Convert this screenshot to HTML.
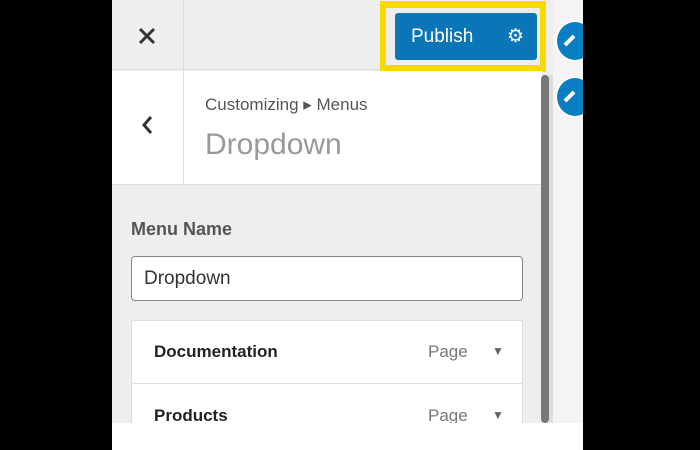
<!DOCTYPE html>
<html><head><style>
*{margin:0;padding:0;box-sizing:border-box}
body{width:700px;height:450px;background:#000;position:relative;overflow:hidden;font-family:"Liberation Sans",sans-serif}
.a{position:absolute}
</style></head><body>
<div class="a" style="left:112px;top:0;width:471px;height:450px;background:#eee"></div>
<div class="a" style="left:553px;top:0;width:30px;height:423px;background:#f4f4f4"></div>
<div class="a" style="left:555px;top:20px;width:40px;height:42px;border-radius:50%;background:#0a7ec2;border:2px solid #fff"></div>
<div class="a" style="left:555px;top:76px;width:40px;height:42px;border-radius:50%;background:#0a7ec2;border:2px solid #fff"></div>
<svg class="a" style="left:562px;top:32px" width="16" height="16"><path d="M3 13 L12 4" stroke="#fff" stroke-width="4"/></svg>
<svg class="a" style="left:562px;top:88px" width="16" height="16"><path d="M3 13 L12 4" stroke="#fff" stroke-width="4"/></svg>
<div class="a" style="left:583px;top:0;width:117px;height:450px;background:#000"></div>
<div class="a" style="left:112px;top:0;width:430px;height:70px;background:#eee;border-bottom:1px solid #ddd"></div>
<div class="a" style="left:183px;top:0;width:1px;height:185px;background:#ddd"></div>
<svg class="a" style="left:138px;top:27px" width="18" height="18"><path d="M2 2 L16 16 M16 2 L2 16" stroke="#333" stroke-width="3"/></svg>
<div class="a" style="left:380px;top:1px;width:166px;height:71px;background:#f7d900"></div>
<div class="a" style="left:386px;top:8px;width:154px;height:57px;background:#eee"></div>
<div class="a" style="left:395px;top:13px;width:142px;height:47px;background:#0a76b8;border-radius:3px;color:#fff;font-size:19px;line-height:47px;padding-left:16px">Publish<span style="position:absolute;right:13px;font-size:19px">⚙</span></div>
<div class="a" style="left:112px;top:71px;width:430px;height:114px;background:#fff;border-bottom:1px solid #ddd"></div>
<div class="a" style="left:183px;top:71px;width:1px;height:114px;background:#ddd"></div>
<svg class="a" style="left:140px;top:115px" width="14" height="20"><path d="M11 2 L4 10 L11 18" stroke="#333" stroke-width="3" fill="none"/></svg>
<div class="a" style="left:205px;top:95px;font-size:17px;color:#555">Customizing ▸ Menus</div>
<div class="a" style="left:205px;top:128px;font-size:30px;color:#999;font-weight:300">Dropdown</div>
<div class="a" style="left:541px;top:75px;width:8px;height:348px;background:#777;border-radius:4px"></div>
<div class="a" style="left:549px;top:75px;width:4px;height:348px;background:#ddd"></div>
<div class="a" style="left:131px;top:219px;font-size:18px;font-weight:bold;color:#555">Menu Name</div>
<div class="a" style="left:131px;top:256px;width:392px;height:45px;background:#fff;border:1px solid #888;border-radius:4px;font-size:19px;color:#333;line-height:43px;padding-left:12px">Dropdown</div>
<div class="a" style="left:131px;top:320px;width:392px;height:110px;background:#fff;border:1px solid #ddd"></div>
<div class="a" style="left:132px;top:383px;width:390px;height:1px;background:#ddd"></div>
<div class="a" style="left:154px;top:342px;font-size:17px;font-weight:bold;color:#222">Documentation</div>
<div class="a" style="left:428px;top:342px;font-size:17px;color:#777">Page</div>
<div class="a" style="left:492px;top:344px;font-size:12px;color:#666">▼</div>
<div class="a" style="left:154px;top:406px;font-size:17px;font-weight:bold;color:#222">Products</div>
<div class="a" style="left:428px;top:406px;font-size:17px;color:#777">Page</div>
<div class="a" style="left:492px;top:408px;font-size:12px;color:#666">▼</div>
<div class="a" style="left:112px;top:423px;width:471px;height:27px;background:#fff"></div>
</body></html>
